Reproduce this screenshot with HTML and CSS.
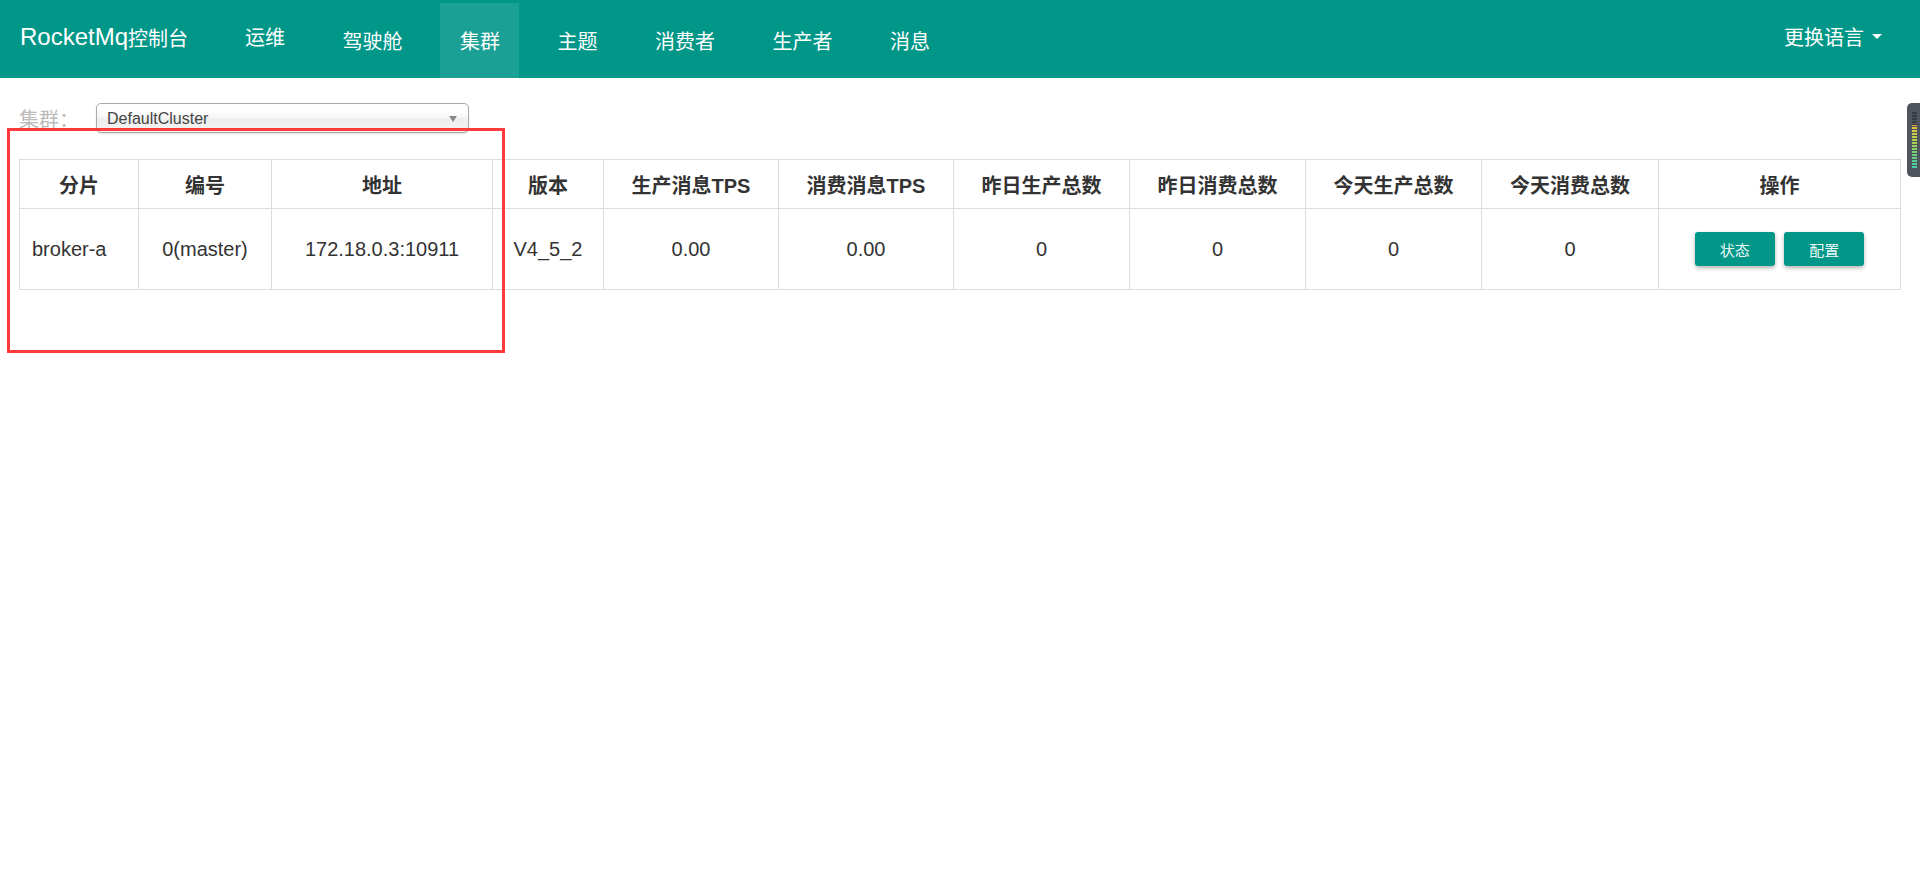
FILE: index.html
```html
<!DOCTYPE html>
<html lang="zh">

<head>
    <meta charset="UTF-8">
    <meta name="viewport" content="width=device-width, initial-scale=1.0">
    <title>RocketMq控制台</title>

    <link rel="stylesheet" href="styles.css">
</head>

<body>
    <header class="navbar">
        <div class="brand">RocketMq<span class="brand_cn">控制台</span></div>
        <ul class="nav">
            <li class="nav_item nav_first"><a href="#">运维</a></li>
            <li class="nav_item"><a href="#">驾驶舱</a></li>
            <li class="nav_item nav_active"><a href="#">集群</a></li>
            <li class="nav_item"><a href="#">主题</a></li>
            <li class="nav_item"><a href="#">消费者</a></li>
            <li class="nav_item"><a href="#">生产者</a></li>
            <li class="nav_item"><a href="#">消息</a></li>
        </ul>
        <div class="lang">更换语言<span class="caret"></span></div>
    </header>

    <div id="wrap">
        <div class="filter">
            <span class="filter_label">集群：</span>
            <div class="select">
                <span>DefaultCluster</span>
                <b class="select_arrow"></b>
            </div>
        </div>

        <table class="broker_table">
            <colgroup>
                <col style="width:119px">
                <col style="width:133px">
                <col style="width:221px">
                <col style="width:111px">
                <col style="width:175px">
                <col style="width:175px">
                <col style="width:176px">
                <col style="width:176px">
                <col style="width:176px">
                <col style="width:177px">
                <col style="width:242px">
            </colgroup>
            <thead>
                <tr>
                    <th>分片</th>
                    <th>编号</th>
                    <th>地址</th>
                    <th>版本</th>
                    <th>生产消息TPS</th>
                    <th>消费消息TPS</th>
                    <th>昨日生产总数</th>
                    <th>昨日消费总数</th>
                    <th>今天生产总数</th>
                    <th>今天消费总数</th>
                    <th>操作</th>
                </tr>
            </thead>
            <tbody>
                <tr>
                    <td class="left">broker-a</td>
                    <td>0(master)</td>
                    <td>172.18.0.3:10911</td>
                    <td>V4_5_2</td>
                    <td>0.00</td>
                    <td>0.00</td>
                    <td>0</td>
                    <td>0</td>
                    <td>0</td>
                    <td>0</td>
                    <td>
                        <button class="btn">状态</button>
                        <button class="btn">配置</button>
                    </td>
                </tr>
            </tbody>
        </table>
    </div>

    <!-- 표시용 빨간 박스 -->
    <div class="mark_box"></div>

    <!-- 오른쪽 끝 위젯 -->
    <div class="side_meter"><div class="meter_bars"></div></div>
</body>

</html>
```

FILE: styles.css
```css
* {
    margin: 0;
    padding: 0;
    box-sizing: border-box;
}

body {
    font-family: "Liberation Sans", "Noto Sans CJK SC", sans-serif;
    color: #333;
    background: #fff;
}

ul li {
    list-style: none;
}

a {
    text-decoration: none;
    color: inherit;
}

.navbar {
    display: flex;
    height: 78px;
    padding: 0 38px 0 20px;
    background-color: #009688;
    color: #fff;
}

.brand {
    display: flex;
    align-items: center;
    font-size: 24px;
    padding-bottom: 4px;
}

.brand_cn {
    font-size: 20px;
}

.nav {
    display: flex;
    margin: 3px 0 0 37px;
}

.nav_item {
    margin-right: 18.5px;
}

.nav_item a {
    display: flex;
    align-items: center;
    height: 100%;
    padding: 0 19px 0 20px;
    font-size: 20px;
}

.nav_first a {
    padding-bottom: 8px;
}

.nav_active {
    background-color: rgba(255, 255, 255, 0.1);
}

.lang {
    display: flex;
    align-items: center;
    margin-left: auto;
    font-size: 20px;
    padding-bottom: 6px;
}

.caret {
    width: 0;
    height: 0;
    margin-left: 8px;
    border-top: 5px solid #fff;
    border-left: 5px solid transparent;
    border-right: 5px solid transparent;
}

#wrap {
    padding: 25px 20px 0 19px;
}

.filter {
    display: flex;
    align-items: center;
}

.filter_label {
    font-family: "Liberation Sans", "Noto Sans CJK TC", sans-serif;
    font-size: 20px;
    color: #bbb;
    margin-right: 17px;
}

.select {
    position: relative;
    display: flex;
    align-items: center;
    width: 373px;
    height: 30px;
    padding: 2px 0 0 10px;
    border: 1px solid #aaa;
    border-radius: 5px;
    background: linear-gradient(#fff 20%, #f6f6f6 50%, #eee 52%, #f4f4f4 100%);
    box-shadow: 0 1px 2px rgba(0, 0, 0, 0.12);
    font-size: 16px;
    color: #444;
}

.select_arrow {
    position: absolute;
    right: 11px;
    top: 12px;
    border-top: 6px solid #888;
    border-left: 4px solid transparent;
    border-right: 4px solid transparent;
}

.broker_table {
    width: 100%;
    margin-top: 26px;
    border-collapse: collapse;
    table-layout: fixed;
    font-size: 20px;
}

.broker_table th,
.broker_table td {
    border: 1px solid #ddd;
    text-align: center;
    vertical-align: middle;
    white-space: nowrap;
}

.broker_table th {
    height: 49px;
    font-weight: bold;
    color: #333;
}

.broker_table td {
    height: 81px;
}

.broker_table td.left {
    text-align: left;
    padding-left: 12px;
}

.btn {
    width: 80px;
    height: 34px;
    margin: 0 2px;
    border: none;
    border-radius: 3px;
    background-color: #009688;
    color: #eef8f6;
    font-family: "Liberation Sans", "Noto Sans CJK SC", sans-serif;
    font-size: 15px;
    box-shadow: 0 2px 4px rgba(0, 0, 0, 0.3);
}

.mark_box {
    position: absolute;
    left: 7px;
    top: 128px;
    width: 498px;
    height: 225px;
    border: 3px solid #ff3b3b;
}

.side_meter {
    position: absolute;
    right: 0;
    top: 103px;
    width: 13px;
    height: 74px;
    padding: 9px 0 0 5px;
    border-radius: 5px 0 0 5px;
    background-color: #50555d;
}

.meter_bars {
    width: 5px;
    height: 56px;
    background:
        repeating-linear-gradient(to bottom, transparent 0 2px, #50555d 2px 3px),
        linear-gradient(to bottom, #363b43 0 13px, #e0a23c 13px, #d8c843 30%, #b6d04c 50%, #76cd72 72%, #45d0ac 100%);
}
```
